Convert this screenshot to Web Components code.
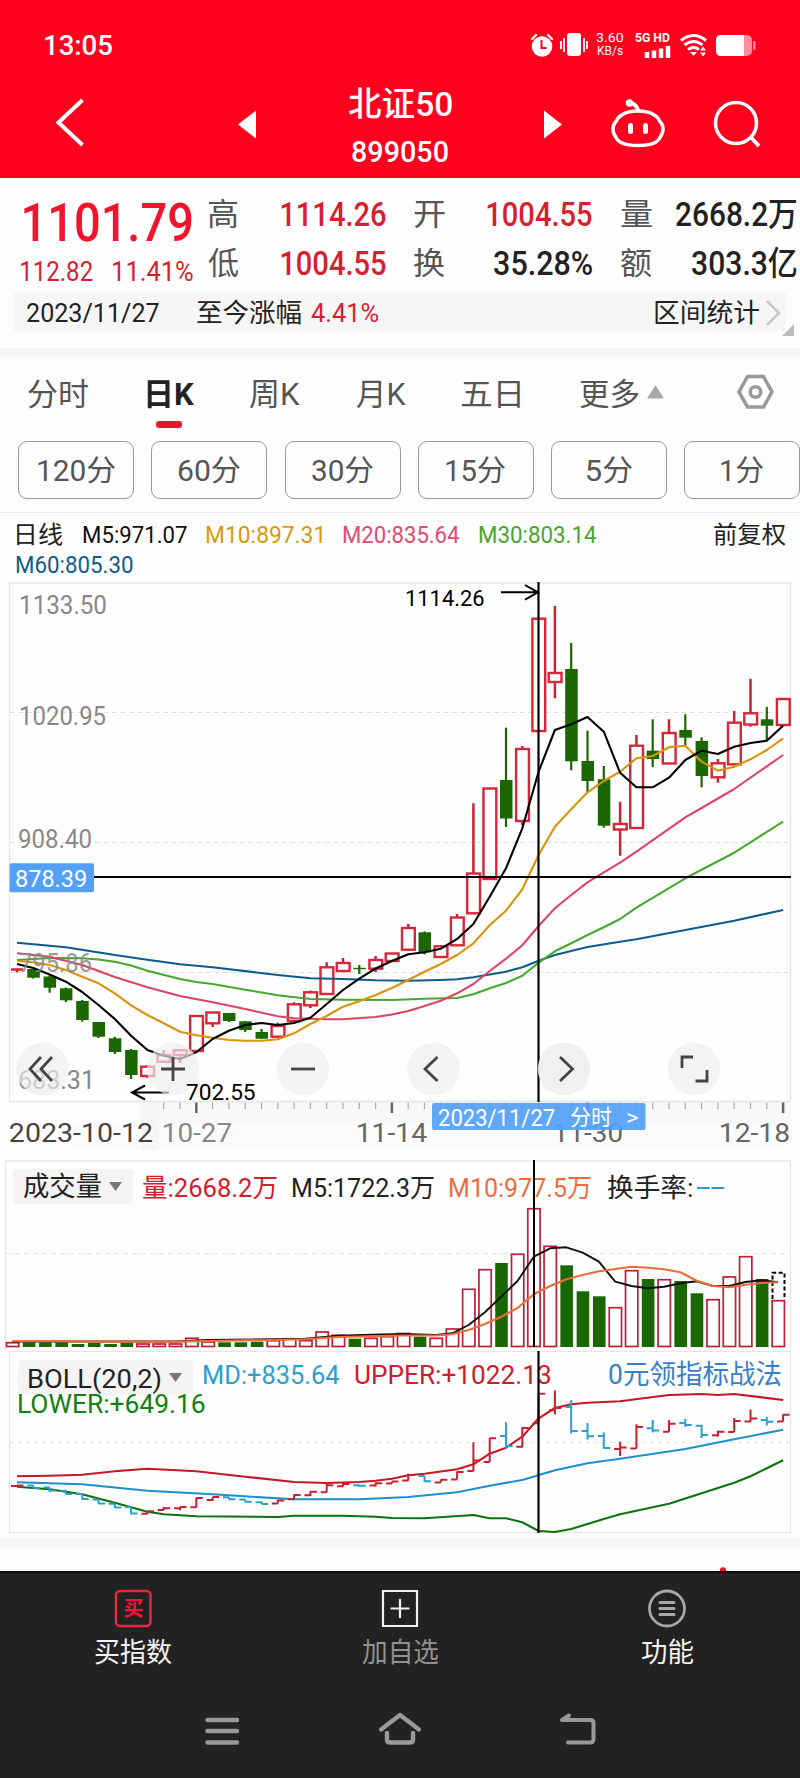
<!DOCTYPE html>
<html lang="zh-CN">
<head>
<meta charset="utf-8">
<title>北证50 899050</title>
<style>
html,body{margin:0;padding:0;background:#fefefe}
body{width:800px;overflow-x:hidden}
</style>
</head>
<body>
<stock-page></stock-page>
<script>
const FONT = 'Roboto,"Noto Sans CJK SC",sans-serif';
const pen = document.createElement('canvas').getContext('2d');

// Ink extent of a string, so a label can be set to an exact width.
function ink(text, size, weight) {
  pen.font = `${weight} ${size}px ${FONT}`;
  const m = pen.measureText(text);
  return { left: -m.actualBoundingBoxLeft, width: m.actualBoundingBoxLeft + m.actualBoundingBoxRight };
}

// One row of labels: [x, width, text, size, color, weight]
function line(height, items, start = 0) {
  let at = start;
  return `<div class="line" style="height:${height}px">` + items.map(([x, w, t, s, c, b = 400]) => {
    const gap = x - at; at = x + w;
    return `<fit-text style="margin-left:${gap}px" w="${w}" size="${s}" color="${c}" weight="${b}">${t}</fit-text>`;
  }).join('') + '</div>';
}

// SVG label at baseline y
function label(x, y, w, text, size, color, weight = 400, extra = '') {
  const k = ink(text, size, weight), s = w / k.width;
  return `<text transform="translate(${x - k.left * s} ${y}) scale(${s} 1)" font-size="${size}" font-weight="${weight}" fill="${color}" ${extra}>${text}</text>`;
}

const BASE = `<style>
:host{display:block;font-family:${FONT}}
*{box-sizing:border-box}
.line{display:flex;align-items:center;white-space:nowrap}
svg{display:block;flex:none}
svg text{font-family:${FONT};white-space:pre}
</style>`;

function define(name, html) {
  customElements.define(name, class extends HTMLElement {
    constructor() {
      super();
      this.attachShadow({ mode: 'open' }).innerHTML = BASE + (typeof html === 'function' ? html() : html);
    }
  });
}

customElements.define('fit-text', class extends HTMLElement {
  connectedCallback() {
    if (this.shadowRoot) return;
    const w = +this.getAttribute('w'), size = +this.getAttribute('size'), weight = this.getAttribute('weight');
    const k = ink(this.textContent, size, weight), s = w / k.width;
    this.attachShadow({ mode: 'open' }).innerHTML = `<style>
      :host{display:block;flex:none;width:${w}px;height:${size}px}
      span{display:block;width:max-content;white-space:pre;font:${weight} ${size}px/1 ${FONT};color:${this.getAttribute('color')};
      transform-origin:0 0;transform:translate(${-k.left * s}px,${size > 16 ? 1 : 0}px) scaleX(${s})}</style><span><slot></slot></span>`;
  }
});

define('status-bar', () => `<style>:host{height:89px;background:#ff001e;display:flex;align-items:center}
.two{display:flex;flex-direction:column}.two svg{margin:2px 0 0 9px}</style>
${line(89, [[45, 67, '13:05', 28, '#fff', 500]])}
<svg style="margin-left:419px" width="24" height="24" viewBox="531 33 24 24"><circle cx="542" cy="46.5" r="10.3" fill="#fff"/><path d="M532 39l4-4M552 39l-4-4" stroke="#fff" stroke-width="2.2" stroke-linecap="round"/><path d="M541.5 40v8h5" fill="none" stroke="#ff001e" stroke-width="2"/></svg>
<svg style="margin-left:5px" width="29" height="24" viewBox="560 33 29 24"><rect x="567" y="33" width="14" height="23" rx="3" fill="#fff"/><path d="M564 38v14M561 41v8M584 38v14M587 41v8" stroke="#fff" stroke-width="1.8"/></svg>
<div class="two" style="margin-left:7px">${line(12, [[0, 27, '3.60', 13.5, '#fff', 400]])}${line(13, [[1, 26, 'KB/s', 12, '#fff', 400]])}</div>
<div class="two" style="margin-left:12px">${line(12, [[0, 35, '5G HD', 13.5, '#fff', 700]])}
<svg width="27" height="12" viewBox="0 0 27 12"><path d="M3 6v6M10 4.500v7.500M17 2.500v9.500M24 0v12" stroke="#fff" stroke-width="4.500"/></svg></div>
<svg style="margin-left:9px" width="29" height="24" viewBox="680 33 29 24"><path d="M681 40.500q12.500-10 25 0M684.500 45q9-7 18 0M688 49.500q5.500-4 11 0" fill="none" stroke="#fff" stroke-width="3"/><path d="M690 52h7l-3.500 4zM700 50.500l3-4 3 4zM700 52.500l3 4 3-4z" fill="#fff"/></svg>
<svg style="margin-left:6px" width="42" height="24" viewBox="715 33 42 24"><rect x="716" y="35" width="36" height="21" rx="5" fill="#ff8d9b"/><rect x="753" y="41" width="2.500" height="9" rx="1" fill="#ff8d9b"/><path d="M721 35h23v21h-23q-5 0-5-5v-11q0-5 5-5z" fill="#fff"/></svg>`);

define('title-bar', () => `<style>:host{height:89px;background:#ff001e;display:flex}.mid{width:104px}</style>
<svg width="348" height="89" viewBox="0 89 348 89"><path d="M82.500 100L58.500 122.500 82.500 145" fill="none" stroke="#fff" stroke-width="4"/><path d="M238 124.500l18-14v28z" fill="#fff"/></svg>
<div class="mid">${line(27, [[0, 104, '北证50', 34, '#fff', 500]])}<div style="height:12px"></div>${line(46, [[4, 96, '899050', 30, '#fff', 500]])}</div>
<svg width="348" height="89" viewBox="452 89 348 89"><path d="M562 124.500l-18-14v28z" fill="#fff"/>
<g fill="none" stroke="#fff" stroke-width="3.500"><path d="M638 111c14 0 20 6 21.500 10 4.500 4 4.500 11 1 15.500-2 6-8 9-22.500 9s-20.500-3-22.500-9c-3.500-4.500-3.500-11.500 1-15.500 1.500-4 7.500-10 21.500-10z"/><path d="M638 111q-1-7-8-8" stroke-width="4"/><circle cx="736" cy="123" r="20.500"/><path d="M750.500 137l8.500 9" stroke-width="4"/></g>
<circle cx="629.500" cy="103" r="3.700" fill="#fff"/><path d="M630.500 125.500v6M645.500 125.500v6" stroke="#fff" stroke-width="5" stroke-linecap="round"/></svg>`);

const RED = '#d71f33', GREY = '#555', INK = '#222';
define('quote-summary', () => `<style>:host{height:170px;position:relative}.top{display:flex;height:115px}.l{width:200px;padding-top:18px}.r{padding-top:11px}
.date{margin:0 14px;background:#f6f6f6;height:38px;display:flex}
.corner{position:absolute;left:782px;top:146px}</style>
<div class="top"><div class="l">${line(52, [[24, 168, '1101.79', 53, '#f0142d', 500]])}${line(46, [[21, 72, '112.82', 27, RED], [113, 80, '11.41%', 27, RED]])}</div>
<div class="r">${line(49, [[208, 30, '高', 31, GREY], [281, 105, '1114.26', 33, RED, 500], [414, 31, '开', 31, GREY], [487, 105, '1004.55', 33, RED, 500], [621, 31, '量', 31, GREY], [676, 121, '2668.2万', 33, INK, 500]], 200)}
${line(49, [[208, 30, '低', 31, GREY], [281, 105, '1004.55', 33, RED, 500], [414, 31, '换', 31, GREY], [494, 98, '35.28%', 33, INK, 500], [621, 31, '额', 31, GREY], [692, 105, '303.3亿', 33, INK, 500]], 200)}</div></div>
<div class="date">${line(38, [[27, 132, '2023/11/27', 26, INK], [197, 104, '至今涨幅', 26, INK], [311, 67, '4.41%', 26, RED], [655, 104, '区间统计', 26, INK]], 14)}
<svg style="margin-left:7px" width="18" height="38" viewBox="766 293 18 38"><path d="M767 301l12 12-12 12" fill="none" stroke="#c8c8c8" stroke-width="2.500"/></svg></div>
<svg class="corner" width="13" height="13"><path d="M0 12H12V0z" fill="#bbb"/></svg>`);

define('period-tabs', () => `<style>:host{border-top:9px solid #f6f6f6;height:93px}.row{display:flex;height:73px}.bar{width:26px;height:7px;border-radius:3px;background:#f01428;margin:-9px 0 0 156px}</style>
<div class="row">${line(73, [[28, 60, '分时', 31, GREY], [147, 47, '日K', 31, INK, 700], [250, 50, '周K', 31, GREY], [356, 50, '月K', 31, GREY], [461, 59, '五日', 31, GREY], [580, 59, '更多', 31, GREY]])}
<svg style="margin-left:7px" width="154" height="73" viewBox="646 357 154 73"><path d="M647 398.500l8.500-13.500 8.500 13.500z" fill="#aaa"/><g fill="none" stroke="#999" stroke-width="3.500"><path d="M747.500 376.500h16l8.500 15.300-8.500 15.300h-16l-8.500-15.300z" stroke-linejoin="round"/><circle cx="755.500" cy="392" r="5.300"/></g></svg></div>
<div class="bar"></div>`);

define('minute-buttons', () => `<style>:host{display:flex;gap:17.300px;padding-left:18px;height:72px;border-bottom:1px solid #ece8e8;overflow:hidden}
.b{flex:none;width:116px;height:58px;border:1px solid #999;border-radius:9px;display:flex;justify-content:center;align-items:center}</style>
${[['120分', 77], ['60分', 62], ['30分', 61], ['15分', 59], ['5分', 45], ['1分', 42]].map(([t, w]) => `<div class="b">${line(58, [[0, w, t, 29, GREY]])}</div>`).join('')}`);

define('ma-legend', () => `<style>:host{height:67px;padding-top:6px}</style>
${line(30, [[17, 46, '日线', 24, INK], [83, 104, 'M5:971.07', 24, '#111'], [206, 116, 'M10:897.31', 24, '#d79a0c'], [343, 116, 'M20:835.64', 24, '#e14a72'], [479, 117, 'M30:803.14', 24, '#46a82c'], [714, 72, '前复权', 24, INK]])}
${line(30, [[16, 117, 'M60:805.30', 24, '#0e5c8c']])}`);

// [rising, high, bodyTop, bodyBottom, low] in plot units
const K = [[1,968,968,970,972.5],[0,969,969,977.7,978.5],[0,975.5,976.5,987.7,992.7],[0,987.5,988.3,1000.3,1002],[0,1000,1001,1020,1021.7],[0,1022,1022,1036.7,1038],[0,1036.7,1038.3,1052,1054],[0,1049,1050,1075,1079],[1,1065,1066.7,1076,1077.7],[1,1050,1055,1061.7,1062],[1,1050,1050.3,1055,1063],[1,1015,1016,1051,1052],[1,1012.3,1012.5,1023.3,1027],[0,1013,1013,1021,1022],[0,1021,1021.3,1030,1032],[0,1029,1032,1038.7,1039],[1,1022.7,1026,1036.7,1037],[1,1002.3,1004.3,1021,1021],[1,990.5,992.3,1005.3,1008],[1,962.3,967.3,994,994],[1,958,963,971,972],[0,965,967.8,969.2,974],[1,956,960,968.7,972],[1,953,953.5,961,961],[1,924,928,949.7,950],[0,931.3,932.3,952.3,954.5],[1,946,946.3,957,957],[1,914,917.5,945.3,946],[1,803.3,873.5,913.3,914],[1,788,788.5,879,879],[0,727.7,780,818.5,827],[1,746,749,821,825],[1,618.7,618.7,731,731],[1,606,673,682,698.3],[0,643,669,761.3,770.3],[0,730.7,761,781,793],[0,766,779.3,825.7,827.7],[1,801.7,824,829.5,855.7],[1,735,745.7,828,828],[0,719.3,750.7,759,767],[1,719.3,733,763.5,764],[0,714.3,730,737.7,745],[0,737.3,741,776,787.3],[1,759,763.3,777.3,782.7],[1,711,722.7,764.3,765],[1,678.7,713.3,724.5,726.7],[0,707,719.3,725.7,740],[1,698.5,699,725,725]];
const cx = i => 17 + 16.3 * i;
const vx = i => 12.5 + 16.29 * i;
const poly = (pts, color, fx = cx, w = 2.1) => `<polyline fill="none" stroke="${color}" stroke-width="${w}" stroke-linejoin="round" points="${pts.map(([i, y]) => fx(i).toFixed(1) + ',' + y).join(' ')}"/>`;
const seq = a => a.map((y, i) => [i, y]);
const M5 = seq([964,968,974.5,981.7,992,1005,1019,1035.7,1050,1055.7,1059,1052.3,1039,1030.7,1025,1023,1025,1023,1017.7,1004,990,978.7,968.5,961,954.3,952.3,948.7,939,924,896.7,868.3,828.3,771.7,730,724.3,717,731.7,772.7,787.3,787.3,777.7,760,750.7,754,746.7,743,740.7,725.7]);
const M10 = seq([960.7,962.3,965,970,976.7,983.3,993.3,1005.3,1015,1023.3,1031.7,1035.3,1037.7,1040,1040.7,1040.7,1039.3,1033.3,1024,1016,1006.7,1001.3,995,988,980,971.7,964,955,943.3,925.3,910.7,889.3,855,826.7,809.3,792.3,781,771.7,758.3,756,747.3,745.7,761.7,770.7,766.7,759.3,750,738.3]);
const M20 = [[0,953.3],[2,956.7],[4,965],[6,977],[8,987.3],[10,996],[12,1002.3],[14,1009],[16,1016.3],[17,1018.3],[19,1019.3],[20,1019.3],[22,1017],[23,1014.5],[24,1011],[25,1006],[26,1000.7],[27,993.3],[28,984],[29,971],[30,958.7],[31,945.3],[32,926],[33,908.3],[34,895],[35,882.3],[36,872.3],[37,862.7],[38,851.7],[41,817.3],[42,808],[44,789],[47,755]];
const M30 = [[0,960],[2,958],[4,958.3],[5,959.5],[6,961.7],[7,965.5],[8,970.7],[10,979],[11,982],[12,984],[14,989.7],[16,995.3],[18,999],[20,999.7],[23,1000],[25,998.7],[27,998],[28,994.3],[29,988.3],[30,983],[31,975.7],[32,962.7],[33,951.3],[34,943.3],[35,935],[36,927.3],[37,919],[38,907.7],[41,878.3],[44,852.7],[47,821.7]];
const M60 = [[0,942.7],[3,947.3],[6,955],[8,959.7],[10,964.3],[12,967.3],[16,975],[18,978.3],[20,979],[22,980.3],[24,980.7],[26,980],[27,979.3],[28,977.3],[30,971.7],[31,967.3],[32,960.7],[33,955],[35,947],[37,941.7],[38,939.3],[41,930],[44,920.7],[47,910]];
const dash = y => `<path d="M10 ${y}H790" stroke="#dedede" stroke-dasharray="5 3.500"/>`;

define('candle-chart', () => {
  const candles = K.map(([up, h, a, b, l], i) => {
    const x = cx(i);
    if (i === 0) return `<path d="M11 969.500H23M17 969v3.500" stroke="#d71f33" stroke-width="2.500"/>`;
    if (!up) return `<path d="M${x} ${h}V${l}" stroke="#1a6600" stroke-width="2.200"/><rect x="${x - 6}" y="${a}" width="12.500" height="${b - a}" fill="#1a6600"/>`;
    return `<path d="M${x} ${h}V${a}M${x} ${b}V${l}" stroke="#cc2236" stroke-width="2.500"/><rect x="${x - 6.2}" y="${a}" width="12.800" height="${b - a}" fill="#fefefe" stroke="#d6263a" stroke-width="2.400"/>`;
  }).join('');
  let ticks = '';
  for (let i = 9; i < 48; i++) ticks += [11, 23, 35, 47].includes(i) ? `<path d="M${cx(i)} 1102.500V1113" stroke="#666" stroke-width="2.500"/>` : `<path d="M${cx(i)} 1102.500V1109" stroke="#aaa" stroke-width="1.200"/>`;
  const glyph = ['M41 1057l-11 12 11 12M52 1057l-11 12 11 12', 'M161 1069h24M173 1057v24', 'M291 1069h24', 'M437.500 1057l-12.500 12 12.500 12', 'M560 1057l12.500 12-12.500 12', 'M693 1057h-11v11M707 1070v11h-11.500'];
  const tools = [42.5, 173, 303, 433.5, 564, 694].map((x, i) => `<circle cx="${x}" cy="1069" r="26.200" fill="#eee" fill-opacity="${i === 4 ? .9 : .68}"/><path d="${glyph[i]}" fill="none" stroke="#444" stroke-width="2.800"/>`).join('');
  return `<svg width="800" height="570" viewBox="0 580 800 570">
<rect x="140" y="1102" width="651" height="22" fill="#f9f8f8"/><rect x="66" y="1124" width="725" height="26" fill="#fcfbfb"/><rect x="142" y="1102" width="17" height="48" fill="#f7f4f5"/>
<rect x="9.500" y="583" width="781" height="518.500" fill="none" stroke="#e6e6e6" stroke-width="1.500"/>${dash(712.5)}${dash(842.5)}${dash(972.5)}
${ticks}${candles}
${poly(M60, '#0e5c8c')}${poly(M30, '#46a82c')}${poly(M20, '#dc4468')}${poly(M10, '#d7940c')}${poly(M5, '#000')}
${label(21, 614, 85, '1133.50', 25, '#888')}${label(21, 725, 85, '1020.95', 25, '#888')}${label(19, 848, 72, '908.40', 25, '#888')}${label(19, 971.5, 72, '795.86', 25, '#888', 400, 'opacity=".85"')}${label(19, 1089, 71, '683.31', 25, '#888')}
<path d="M94 877H791M538.500 582V1102" stroke="#000" stroke-width="2.200"/>
<rect x="9.500" y="863.300" width="84.500" height="29" rx="2" fill="#54a0f8"/>${label(16, 886.5, 70, '878.39', 23.5, '#fff')}
${label(406, 606, 78, '1114.26', 22.5, '#000')}<path d="M501 592.300H538M525 585l13 7.300-13 7.300" fill="none" stroke="#000" stroke-width="2"/>
<path d="M169 1092.500H132M145 1085.500l-13 7 13 7" fill="none" stroke="#000" stroke-width="2"/>
${tools}${label(186, 1100, 69, '702.55', 22.5, '#000')}
${label(10, 1141.5, 143, '2023-10-12', 25, '#444')}${label(164, 1141.5, 67, '10-27', 25, '#888')}${label(358, 1141.5, 69, '11-14', 25, '#666')}${label(555, 1141.5, 67, '11-30', 25, '#666')}${label(721, 1141.5, 68, '12-18', 25, '#666')}
<rect x="432" y="1103" width="213.500" height="27" rx="2" fill="#54a0f8" fill-opacity=".92"/>
${label(439, 1125.5, 116, '2023/11/27', 23.5, '#fff')}${label(570, 1125, 42, '分时', 22, '#fff')}${label(627, 1124.5, 11, '>', 22, '#fff')}</svg>`;
});

const PANEL = `<style>:host{display:grid;overflow:hidden}:host>*{grid-area:1/1}.head{align-self:start;z-index:0}svg.plot{z-index:1}
.chip{background:#f5f3f4;border-radius:4px;height:35px;display:flex;align-items:center}.row{display:flex;align-items:flex-start}</style>`;
define('volume-panel', () => {
  const top = [1342.7,1342.3,1342.3,1342.3,1344,1343,1344,1343,1344,1344,1344,1338.3,1342,1342.3,1342.3,1341.7,1340.7,1338.7,1340.7,1332,1335.3,1338.7,1338.3,1336.7,1333.5,1336.7,1338.3,1329,1289.3,1269.7,1263,1254.3,1208.7,1246.3,1265.3,1291.3,1296.3,1307.7,1270.7,1279,1279.7,1281,1293.3,1299.7,1277,1256.7,1279,1300.7];
  const bars = top.map((y, i) => {
    const x = vx(i) - 6;
    return K[i][0] ? `<rect x="${x}" y="${y}" width="12.300" height="${1346.5 - y}" fill="${i < 24 ? 'none' : '#fefefe'}" stroke="#bd1e38" stroke-width="1.700"/>` : `<rect x="${x}" y="${y}" width="12.600" height="${1347 - y}" fill="#1a6600"/>`;
  }).join('');
  const a5 = [[0,1341.5],[10,1341.5],[12,1340],[18,1338.8],[20,1335.8],[22,1334.7],[24,1334],[26,1335],[27,1333.3],[28,1325],[29,1312.3],[30,1296.7],[31,1281],[32,1256.7],[33,1248.3],[34,1247.3],[35,1252.7],[36,1261.7],[37,1281.7],[38,1286],[39,1288.3],[40,1286.7],[41,1283.3],[42,1281.3],[43,1286],[44,1286],[45,1282],[46,1280.3],[47,1282.3]];
  const a10 = [[0,1341],[10,1341.6],[12,1341],[18,1339.3],[20,1337],[24,1335.5],[26,1335.5],[27,1334.3],[28,1330],[29,1324],[30,1316.7],[31,1308],[32,1294.3],[33,1286],[34,1279.3],[35,1275],[36,1271.3],[37,1269],[38,1266.7],[39,1267.7],[40,1269.3],[41,1272.3],[42,1280.7],[43,1286],[44,1287.3],[45,1284.7],[46,1283],[47,1282.3]];
  return PANEL + `<style>:host{height:200px}.head{padding:19px 0 0 13px}</style>
<div class="head row"><div class="chip" style="width:120px">${line(35, [[10, 78, '成交量', 27, INK]])}<svg style="margin-left:8px" width="13" height="9"><path d="M0 0H13L6.500 9z" fill="#777"/></svg></div>
${line(35, [[143, 134, '量:2668.2万', 26, '#d0202e'], [293, 141, 'M5:1722.3万', 26, INK], [450, 141, 'M10:977.5万', 26, '#ee6c3a'], [607, 85, '换手率:', 26, INK], [696, 28, '--', 27, '#2f9bd0']], 133)}</div>
<svg class="plot" width="800" height="200" viewBox="0 1150 800 200"><rect x="5.500" y="1161" width="785" height="200" fill="none" stroke="#e6e6e6" stroke-width="1.300"/><path d="M6 1253.500H790" stroke="#e6e2e2" stroke-dasharray="5 4"/>
${bars}<path d="M772.500 1299V1272.700H784.500V1299" fill="none" stroke="#000" stroke-width="2" stroke-dasharray="4 2.500"/>
${poly(a5, '#111', vx, 1.9)}${poly(a10, '#ee6c3a', vx)}<path d="M534 1160V1347" stroke="#000" stroke-width="2"/></svg>`;
});

define('boll-panel', () => {
  const f = y => (1421.6 + .2625 * (y - 725)).toFixed(1);
  const ohlc = K.map(([up, h, a, b, l], i) => {
    const x = cx(i), [o, c] = up ? [b, a] : [a, b];
    return `<path d="M${x - 6} ${f(o)}H${x}M${x} ${f(h)}V${f(l)}M${x} ${f(c)}H${x + 6.5}" fill="none" stroke="${up ? '#c8202e' : '#2b9fd0'}" stroke-width="2"/>`;
  }).join('');
  const up = [[0,1476.3],[2,1475.7],[4,1474.7],[6,1471.3],[8,1468.7],[11,1471.3],[14,1476.7],[17,1482],[19,1483],[21,1482],[22,1480.7],[23,1478.7],[24,1475.3],[25,1473.7],[27,1469.3],[28,1464.3],[29,1453.7],[30,1447.7],[31,1436.7],[32,1418.3],[33,1408],[34,1404.3],[35,1402.7],[37,1401.3],[40,1395],[42,1394],[43,1395],[44,1394],[47,1400]];
  const md = [[0,1482.3],[4,1484.3],[8,1490.7],[12,1494.3],[17,1499.3],[21,1499.3],[24,1497],[27,1492.3],[29,1485.7],[31,1480],[33,1470.3],[35,1463.3],[37,1458.7],[41,1449],[44,1439.3],[47,1429.7]];
  const lo = [[0,1486.7],[2,1489.3],[4,1494.3],[6,1502.7],[8,1511.7],[9,1514.3],[11,1516.3],[16,1517],[17,1515.7],[20,1515.7],[22,1516.7],[23,1518],[25,1518.3],[28,1515],[29,1518.3],[30,1518.3],[31,1522.3],[32,1531],[33,1532],[34,1529],[36,1519],[37,1514.3],[40,1503.7],[42,1493.3],[44,1482.7],[45,1476.3],[46,1468.3],[47,1460.3]];
  return PANEL + `<style>:host{height:188px}.head{padding:10px 0 0 18px}.head2{margin-top:-8px;margin-left:-18px}</style>
<div class="head"><div class="row"><div class="chip" style="width:175px">${line(35, [[11, 132, 'BOLL(20,2)', 26, INK]])}<svg style="margin-left:8px" width="13" height="9"><path d="M0 0H13L6.500 9z" fill="#777"/></svg></div>
${line(28, [[204, 136, 'MD:+835.64', 26, '#2b9fd0'], [355, 195, 'UPPER:+1022.13', 26, '#c8202e'], [609, 172, '0元领指标战法', 27, '#3880c8']], 193)}</div>
<div class="head2">${line(32, [[19, 186, 'LOWER:+649.16', 26, '#108010']])}</div></div>
<svg class="plot" width="800" height="188" viewBox="0 1350 800 188"><rect x="9.500" y="1351.500" width="781" height="181" fill="none" stroke="#e6e6e6" stroke-width="1.300"/><path d="M10 1442.500H790" stroke="#e4e4e4" stroke-dasharray="3 5"/>
${poly(up, '#c41825')}${poly(md, '#2090cc')}${poly(lo, '#0c730c')}${ohlc}<path d="M538.500 1351V1533" stroke="#000" stroke-width="2.200"/></svg>`;
});

define('section-gap', `<style>:host{height:33px;border-top:9px solid #f6f6f6}svg{margin-left:719px;padding-top:20px}</style><svg width="9" height="24"><circle cx="4" cy="3.500" r="3.200" fill="#d01c2c"/></svg>`);

define('action-bar', () => `<style>:host{height:207px;background:#222;border-top:2px solid #0e0e12}.tabs{display:flex;justify-content:space-between;height:105px;padding-top:16px}.tab{width:266px;display:flex;flex-direction:column;align-items:center}.sys{display:block}</style>
<div class="tabs">
<div class="tab"><svg width="38" height="40" viewBox="0 0 38 40"><rect x="2" y="2" width="34.500" height="35" rx="4" fill="none" stroke="#f0243c" stroke-width="2.400"/>${label(9.5, 27, 20, '买', 20, '#ff1034', 700)}</svg>${line(46, [[0, 77, '买指数', 27, '#f4f4f4']])}</div>
<div class="tab"><svg width="38" height="40" viewBox="0 0 38 40"><path d="M2 2h34v35h-34zM19 10v19M9.500 19.500h19" fill="none" stroke="#f0f0f0" stroke-width="2.200"/></svg>${line(46, [[0, 77, '加自选', 27, '#929292']])}</div>
<div class="tab"><svg width="38" height="40" viewBox="0 0 38 40"><g fill="none" stroke="#a8a8a8"><circle cx="19" cy="19.500" r="17.500" stroke-width="2.800"/><path d="M12 13.500h14M12 19.500h14M12 25.500h14" stroke-width="3" stroke-linecap="round"/></g></svg>${line(46, [[0, 51, '功能', 27, '#f4f4f4']])}</div>
</div>
<svg class="sys" width="800" height="100" viewBox="0 1678 800 100"><g fill="none" stroke="#999" stroke-width="4.400" stroke-linecap="round" stroke-linejoin="round"><path d="M207.500 1720h29.500M207.500 1731h29.500M207.500 1742.500h29.500"/><path d="M381 1729.500l19-14.500 19 14.500M387 1733v6.500q0 3 3 3h20q3 0 3-3v-6.500"/><path d="M568 1742.500h22q3.500 0 3.500-3.500v-16q0-3-3.500-3h-28l7-4.500" stroke-width="4"/></g></svg>`);

define('stock-page', `<style>:host{width:800px;height:1778px;overflow:hidden;background:#fefefe}</style>
<status-bar></status-bar><title-bar></title-bar><quote-summary></quote-summary><period-tabs></period-tabs><minute-buttons></minute-buttons>
<ma-legend></ma-legend><candle-chart></candle-chart><volume-panel></volume-panel><boll-panel></boll-panel><section-gap></section-gap><action-bar></action-bar>`);
</script>
</body>
</html>
